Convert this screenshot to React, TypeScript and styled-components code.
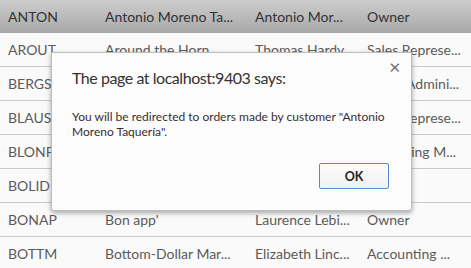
import React from "react";
import styled, { createGlobalStyle } from "styled-components";

const GlobalStyle = createGlobalStyle`
  html, body {
    margin: 0;
    padding: 0;
    background: #fafafa;
    font-family: Lato, "Open Sans", sans-serif;
  }
`

const Page = styled.div`
  position: relative;
  width: 471px;
  height: 268px;
  overflow: hidden;
  background: #fafafa;
`

const Row = styled.div<{ $header?: boolean }>`
  display: grid;
  grid-template-columns: 97px 150px 112px 112px;
  height: ${p => (p.$header ? "33px" : "34px")};
  align-items: center;
  box-sizing: border-box;
  border-bottom: ${p => (p.$header ? "none" : "1px solid #c9c9c9")};
  background: ${p => (p.$header ? "linear-gradient(#cdcdcd, #a8a8a8)" : "#fafafa")};
  color: ${p => (p.$header ? "#333" : "#5a5a5a")};
  font-size: 14px;
`

const Cell = styled.div`
  padding-left: 8px;
  white-space: nowrap;
  overflow: hidden;
`

const Dialog = styled.div`
  position: absolute;
  left: 51px;
  top: 52px;
  width: 361px;
  height: 159px;
  box-sizing: border-box;
  background: #fcfcfc;
  border: 1px solid #bdbdbd;
  border-radius: 0 0 3px 3px;
  box-shadow: 0 2px 5px rgba(0, 0, 0, 0.35);
  padding: 14px 20px 0 20px;
  display: flex;
  flex-direction: column;
`

const Close = styled.div`
  position: absolute;
  right: 10px;
  top: 6px;
  color: #777;
  font-size: 15px;
  font-weight: bold;
  font-family: "DejaVu Sans", sans-serif;
`

const Title = styled.div`
  font-size: 16px;
  letter-spacing: -0.45px;
  color: #333;
  line-height: 22px;
`

const Message = styled.div`
  margin-top: 20px;
  font-size: 12px;
  line-height: 15px;
  color: #3a2e2e;
`

const Actions = styled.div`
  margin-top: auto;
  margin-bottom: 21px;
  display: flex;
  justify-content: flex-end;
  padding-right: 2px;
`

const OkButton = styled.button`
  width: 70px;
  height: 26px;
  border: 1px solid #5b89c7;
  border-radius: 2px;
  background: linear-gradient(#fdfdfd, #f1f1f1);
  font-family: inherit;
  font-size: 12.5px;
  font-weight: bold;
  color: #222;
  padding: 0;
`

const rows = [
  ["AROUT", "Around the Horn", "Thomas Hardy", "Sales Represe..."],
  ["BERGS", "Berglunds snabb...", "Christina Berg...", "Order Admini..."],
  ["BLAUS", "Blauer See Delik...", "Hanna Moos", "Sales Represe..."],
  ["BLONP", "Blondesddsl pèr...", "Frédérique Cit...", "Marketing M..."],
  ["BOLID", "Bólido Comidas...", "Martín Sommer", "Owner"],
  ["BONAP", "Bon app'", "Laurence Lebi...", "Owner"],
  ["BOTTM", "Bottom-Dollar Mar...", "Elizabeth Linc...", "Accounting ..."],
]

export default function App() {
  return (
    <Page>
      <GlobalStyle />
      <Row $header>
        <Cell>ANTON</Cell>
        <Cell>Antonio Moreno Ta...</Cell>
        <Cell>Antonio Mor...</Cell>
        <Cell>Owner</Cell>
      </Row>
      {rows.map(r => (
        <Row key={r[0]}>
          {r.map((c, i) => (
            <Cell key={i}>{c}</Cell>
          ))}
        </Row>
      ))}
      <Dialog>
        <Close>✕</Close>
        <Title>The page at localhost:9403 says:</Title>
        <Message>
          You will be redirected to orders made by customer "Antonio Moreno Taquería".
        </Message>
        <Actions>
          <OkButton>OK</OkButton>
        </Actions>
      </Dialog>
    </Page>
  );
}
